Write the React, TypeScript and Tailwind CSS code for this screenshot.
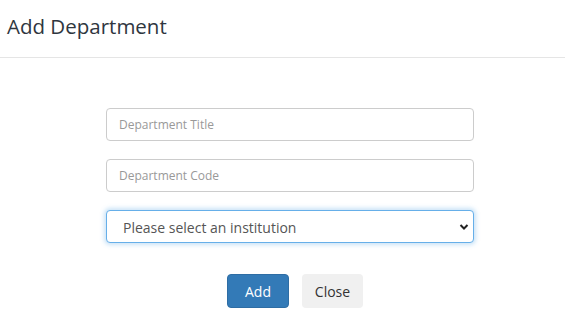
export default function App() {
  return (
    <div className="w-[565px] h-[323px] bg-white font-['Open_Sans',sans-serif] text-[#333]">
      <div className="h-[58px] border-b border-[#e5e5e5] flex items-center pl-[7px]">
        <h4 className="text-[20.5px] font-medium text-[#2f3640] leading-none pb-[4px]">Add Department</h4>
      </div>

      <form className="ml-[106px] w-[368px] pt-[50px] flex flex-col gap-[18px]">
        <input
          placeholder="Department Title"
          className="h-[33px] rounded-[4px] border border-[#ccc] px-[12px] text-[12px] placeholder:text-[#999] outline-none"
        />
        <input
          placeholder="Department Code"
          className="h-[33px] rounded-[4px] border border-[#ccc] px-[12px] text-[12px] placeholder:text-[#999] outline-none"
        />
        <div className="relative">
          <select className="w-full h-[33px] appearance-none rounded-[4px] border border-[#66afe9] shadow-[0_0_4px_2px_rgba(102,175,233,0.35)] pl-[16px] pt-[1px] text-[14px] text-[#555] bg-white outline-none">
            <option>Please select an institution</option>
          </select>
          <svg
            className="absolute right-[5px] top-[12px] w-[10px] h-[10px] pointer-events-none"
            viewBox="0 0 10 10"
          >
            <path d="M1.5 3 L5 6.5 L8.5 3" fill="none" stroke="#222" strokeWidth="2" />
          </svg>
        </div>
        <div className="flex gap-[13px] pl-[121px] pt-[13px]">
          <button type="button" className="w-[62px] h-[34px] rounded-[4px] bg-[#337ab7] border border-[#2e6da4] text-white text-[14px]">
            Add
          </button>
          <button type="button" className="w-[61px] h-[34px] rounded-[4px] bg-[#f0f0f0] text-[#333] text-[14px]">
            Close
          </button>
        </div>
      </form>
    </div>
  )
}
